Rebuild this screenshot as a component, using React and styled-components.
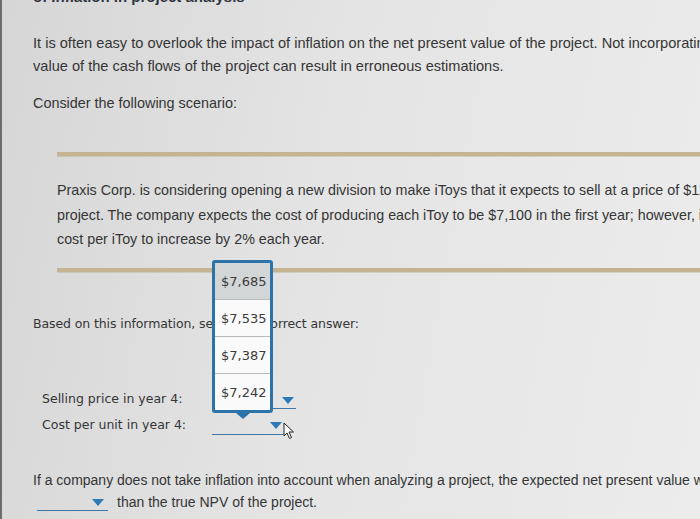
import React from 'react';
import styled, { createGlobalStyle } from 'styled-components';

const Global = createGlobalStyle`
  html, body {
    margin: 0;
    padding: 0;
    background: #e2e2e2;
  }
`;

const Page = styled.div`
  position: relative;
  width: 700px;
  height: 519px;
  overflow: hidden;
  box-sizing: border-box;
  padding-left: 31px;
  border-left: 2px solid #6d6d6d;
  background: linear-gradient(100deg, #d6d6d6 0%, #e4e4e4 45%, #ececec 100%);
  font-family: 'Liberation Sans', Arial, sans-serif;
  font-size: 14px;
  color: #353535;
`;

const Heading = styled.h2`
  margin: -12px 0 0;
  font-size: 15px;
  line-height: 18px;
  font-weight: bold;
  color: #2f3540;
  white-space: nowrap;
`;

const Para = styled.p`
  margin: ${p => p.$top}px 0 0;
  font-size: ${p => p.$size || 14}px;
  line-height: ${p => p.$lh || 23}px;
  white-space: nowrap;
`;

const Scenario = styled.div`
  padding-left: 24px;
`;

const Rule = styled.div`
  margin-top: ${p => p.$top}px;
  height: 4px;
  background: #c5b491;
  box-shadow: 0 1px 0 rgba(150, 130, 100, 0.25);
`;

const Questions = styled.div`
  margin-top: 51px;
  padding-left: 9px;
  display: grid;
  grid-template-columns: 170px auto;
  grid-auto-rows: 26px;
  align-items: center;
  justify-content: start;
`;

const Label = styled.span`
  white-space: nowrap;
  font-family: 'DejaVu Sans', Verdana, sans-serif;
  font-size: 12.5px;
`;

const Select = styled.span`
  position: relative;
  display: inline-block;
  vertical-align: middle;
  width: ${p => p.$w}px;
  height: ${p => p.$h || 20}px;
  border-bottom: 1.5px solid #3f77a6;
`;

const Caret = styled.span`
  position: absolute;
  right: ${p => p.$r || 2}px;
  bottom: ${p => p.$b || 4}px;
  width: 0;
  height: 0;
  border-left: 6px solid transparent;
  border-right: 6px solid transparent;
  border-top: 7px solid #2d7ab6;
`;

const Popup = styled.div`
  position: absolute;
  left: 0;
  bottom: -5px;
  width: 61px;
  box-sizing: border-box;
  border: 3px solid #2b73a8;
  border-radius: 3px;
  background: #fafafa;
  z-index: 2;

  &::after {
    content: '';
    position: absolute;
    left: 50%;
    bottom: -9px;
    margin-left: -7px;
    border-left: 7px solid transparent;
    border-right: 7px solid transparent;
    border-top: 6px solid #2b73a8;
  }
`;

const Option = styled.div`
  height: 36px;
  display: flex;
  align-items: center;
  padding-left: 6px;
  font-family: 'DejaVu Sans', Verdana, sans-serif;
  font-size: 13px;
  color: #3c3c3c;
  background: ${p => (p.$active ? '#d2d6d6' : 'transparent')};
  border-top: ${p => (p.$first ? 'none' : '1px solid #b9bcbc')};
`;

const Based = styled.p`
  margin: 40px 0 0;
  line-height: 23px;
  white-space: nowrap;
  font-family: 'DejaVu Sans', Verdana, sans-serif;
  font-size: 12.5px;
  letter-spacing: -0.1px;
`;

const LineTwo = styled.span`
  display: flex;
  align-items: center;
  gap: 9px;
  margin-left: 4px;
`;

const Cursor = styled.svg`
  position: absolute;
  right: -12px;
  bottom: -6px;
  z-index: 3;
`;

const options = ['$7,685', '$7,535', '$7,387', '$7,242'];

export default function App() {
  return (
    <>
      <Global />
      <Page>
        <Heading>of Inflation in project analysis</Heading>
        <Para $top={26} $size={14.6}>
          It is often easy to overlook the impact of inflation on the net present value of the project. Not incorporating inflation into the
          <br />
          value of the cash flows of the project can result in erroneous estimations.
        </Para>
        <Para $top={14} $size={14.4}>Consider the following scenario:</Para>
        <Scenario>
          <Rule $top={37} />
          <Para $top={22} $lh={24.5} $size={14.3}>
            Praxis Corp. is considering opening a new division to make iToys that it expects to sell at a price of $12,000 in the first year of the
            <br />
            project. The company expects the cost of producing each iToy to be $7,100 in the first year; however, it expects the
            <br />
            cost per iToy to increase by 2% each year.
          </Para>
          <Rule $top={16} />
        </Scenario>
        <Based>Based on this information, select the correct answer:</Based>
        <Questions>
          <Label>Selling price in year 4:</Label>
          <Select $w={84}>
            <Caret />
            <Popup>
              {options.map((o, i) => (
                <Option key={o} $active={i === 0} $first={i === 0}>
                  {o}
                </Option>
              ))}
            </Popup>
          </Select>
          <Label>Cost per unit in year 4:</Label>
          <Select $w={71}>
            <Caret $r={1} $b={5} />
            <Cursor width="12" height="18" viewBox="0 0 12 18">
              <path d="M1 1 L1 14 L4 11 L6.5 16.5 L8.5 15.5 L6 10 L10.5 10 Z" fill="#fff" stroke="#222" strokeWidth="1" />
            </Cursor>
          </Select>
        </Questions>
        <Para $top={31} $lh={22}>
          If a company does not take inflation into account when analyzing a project, the expected net present value will be
          <LineTwo>
            <Select $w={71} $h={18}>
              <Caret $r={4} />
            </Select>
            than the true NPV of the project.
          </LineTwo>
        </Para>
      </Page>
    </>
  );
}
